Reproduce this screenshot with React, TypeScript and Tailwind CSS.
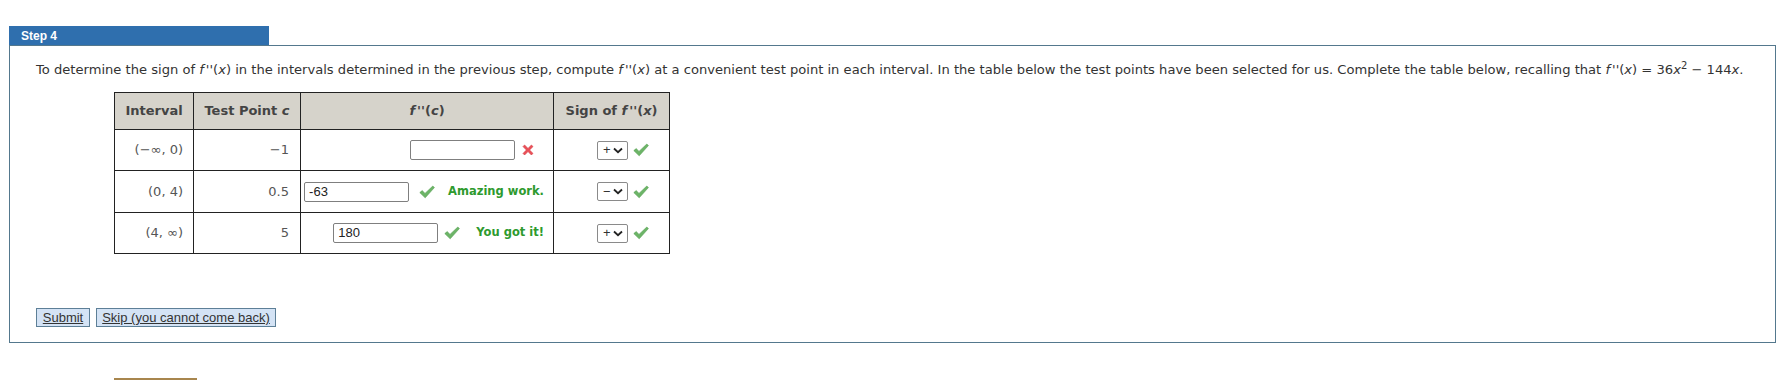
import React from 'react';

const CheckIcon = () => (
  <svg width="16" height="14" viewBox="0 0 16 14" className="shrink-0">
    <path d="M0.8 7.6 L3.2 5.6 L6 8.4 L13.8 1 L15.4 2.6 L6.2 12.8 Z" fill="#6cb467" stroke="#54a050" strokeWidth="0.6" strokeLinejoin="round" />
  </svg>
);

const CrossIcon = () => (
  <svg width="14" height="14" viewBox="0 0 14 14" className="shrink-0">
    <path d="M2 3.6 L3.6 2 L7 5.4 L10.4 2 L12 3.6 L8.6 7 L12 10.4 L10.4 12 L7 8.6 L3.6 12 L2 10.4 L5.4 7 Z" fill="#ea4f57" stroke="#d53a43" strokeWidth="0.6" strokeLinejoin="round" />
  </svg>
);

const SignSelect = ({ value }: { value: string }) => (
  <div className="flex h-[19px] w-[31px] items-center justify-between rounded-[2px] border border-[#8a8a8a] bg-white pl-[5px] pr-[4px] font-['Liberation_Sans',Arial,sans-serif] text-[13px] text-[#333]">
    <span>{value}</span>
    <svg width="10" height="7" viewBox="0 0 10 7">
      <path d="M1 1.5 L5 5.2 L9 1.5" fill="none" stroke="#222" strokeWidth="1.8" />
    </svg>
  </div>
);

const AnswerInput = ({ value }: { value: string }) => (
  <div className="h-[20px] w-[105px] rounded-[2px] border border-[#7f7f7f] bg-white px-[4px] text-left font-['Liberation_Sans',Arial,sans-serif] text-[13px] leading-[18px] text-[#222]">
    {value}
  </div>
);

const Fpp = ({ v }: { v: string }) => (
  <span>
    <i>f</i>
    <span className="ml-[2px]">''</span>(<i>{v}</i>)
  </span>
);

export default function App() {
  return (
    <div className="h-[380px] w-full overflow-hidden bg-white pl-[9px] pt-[26px] font-['DejaVu_Sans',Verdana,sans-serif] text-[#333]">
      <div className="flex h-[19px] w-[260px] items-center bg-[#2f6fae] pl-[12px] font-['Liberation_Sans',Arial,sans-serif] text-[12px] font-bold text-white">
        Step 4
      </div>
      <div className="h-[298px] w-[1767px] border border-[#54788d] pt-[16px]">
        <p className="pl-[26px] text-[13.1px] leading-[16px] text-[#333]">
          To determine the sign of <Fpp v="x" /> in the intervals determined in the previous step, compute <Fpp v="x" /> at a convenient test point in each interval. In the table below the test points have been selected for us. Complete the table below, recalling that <Fpp v="x" /> = 36<i>x</i>
          <sup className="text-[10px]">2</sup> − 144<i>x</i>.
        </p>

        <table className="ml-[104px] mt-[14px] border-collapse text-[13px]">
          <thead>
            <tr className="h-[37px] bg-[#d6d3cb] font-bold text-[#444]">
              <th className="w-[79px] border border-[#222] text-center">Interval</th>
              <th className="w-[107px] border border-[#222] text-center">
                Test Point <i>c</i>
              </th>
              <th className="w-[253px] border border-[#222] text-center">
                <Fpp v="c" />
              </th>
              <th className="w-[116px] border border-[#222] text-center">
                Sign of <Fpp v="x" />
              </th>
            </tr>
          </thead>
          <tbody className="text-[#555]">
            <tr className="h-[41px]">
              <td className="border border-[#222] pr-[10px] text-right">(−∞, 0)</td>
              <td className="border border-[#222] pr-[11px] text-right">−1</td>
              <td className="border border-[#222] pr-[18px]">
                <div className="flex items-center justify-end gap-[6px]">
                  <AnswerInput value="" />
                  <CrossIcon />
                </div>
              </td>
              <td className="border border-[#222] pr-[20px]">
                <div className="flex items-center justify-end gap-[5px]">
                  <SignSelect value="+" />
                  <CheckIcon />
                </div>
              </td>
            </tr>
            <tr className="h-[42px]">
              <td className="border border-[#222] pr-[10px] text-right">(0, 4)</td>
              <td className="border border-[#222] pr-[11px] text-right">0.5</td>
              <td className="border border-[#222] pr-[9px]">
                <div className="flex items-center justify-end">
                  <AnswerInput value="-63" />
                  <span className="ml-[10px]">
                    <CheckIcon />
                  </span>
                  <span className="ml-[13px] text-[11.5px] font-bold text-[#2e9a2e]">Amazing work.</span>
                </div>
              </td>
              <td className="border border-[#222] pr-[20px]">
                <div className="flex items-center justify-end gap-[5px]">
                  <SignSelect value="−" />
                  <CheckIcon />
                </div>
              </td>
            </tr>
            <tr className="h-[41px]">
              <td className="border border-[#222] pr-[10px] text-right">(4, ∞)</td>
              <td className="border border-[#222] pr-[11px] text-right">5</td>
              <td className="border border-[#222] pr-[9px]">
                <div className="flex items-center justify-end">
                  <AnswerInput value="180" />
                  <span className="ml-[6px]">
                    <CheckIcon />
                  </span>
                  <span className="ml-[16px] text-[11.5px] font-bold text-[#2e9a2e]">You got it!</span>
                </div>
              </td>
              <td className="border border-[#222] pr-[20px]">
                <div className="flex items-center justify-end gap-[5px]">
                  <SignSelect value="+" />
                  <CheckIcon />
                </div>
              </td>
            </tr>
          </tbody>
        </table>

        <div className="ml-[26px] mt-[54px] flex gap-[6px] font-['Liberation_Sans',Arial,sans-serif] text-[13px] text-[#333]">
          <button className="h-[19px] w-[54px] border border-[#5d7f97] bg-[#d4e3f5] leading-[16px] underline">Submit</button>
          <button className="h-[19px] w-[180px] border border-[#5d7f97] bg-[#d4e3f5] leading-[16px] underline">
            Skip (you cannot come back)
          </button>
        </div>
      </div>
      <div className="ml-[105px] mt-[35px] h-[20px] w-[83px] border-t-2 border-[#a8864e] bg-[#fdf6dc]" />
    </div>
  );
}
